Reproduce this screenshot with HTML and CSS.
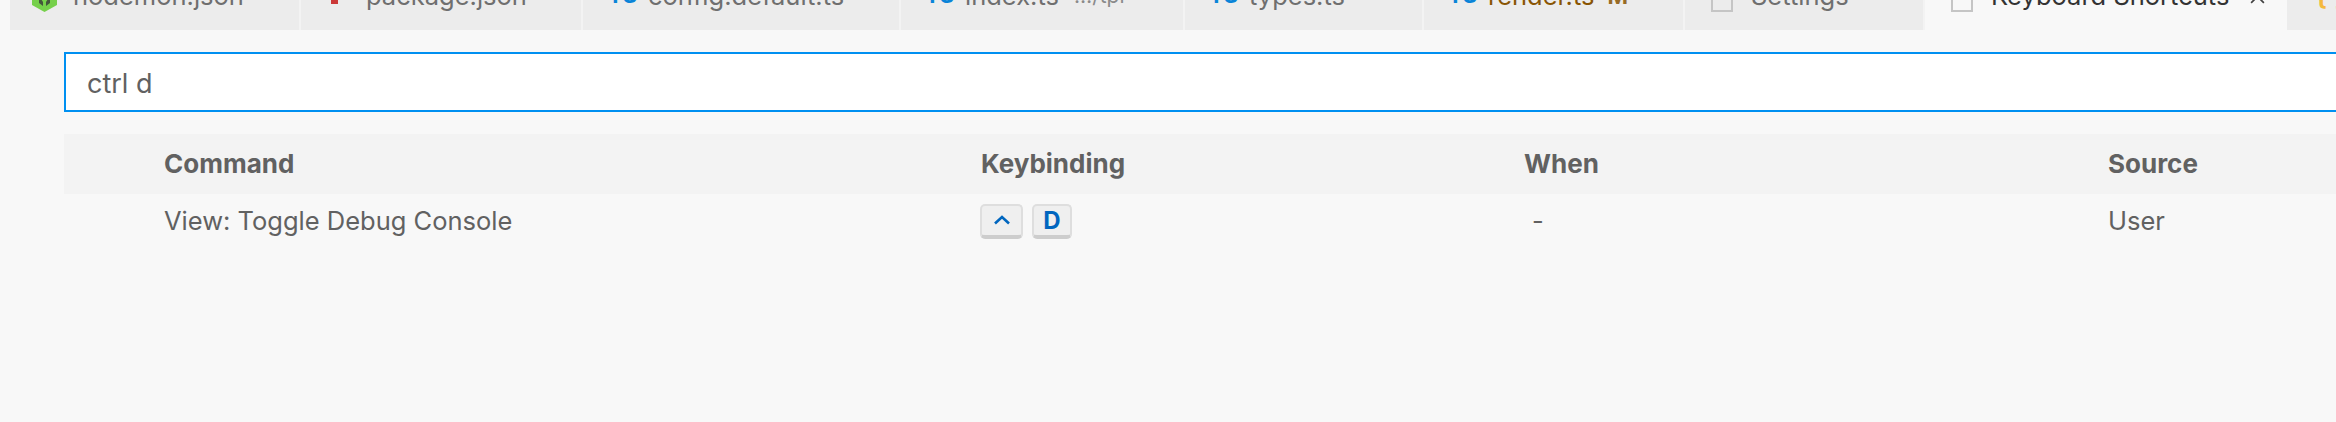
FILE: index.html
```html
<!DOCTYPE html>
<html lang="en">
<head>
    <meta charset="UTF-8">
    <title>Keyboard Shortcuts</title>
    <link rel="stylesheet" href="styles.css">
</head>
<body>
    <div class="tabs">
        <div class="tab tab-nodemon">
            <svg class="icon-nodemon" viewBox="0 0 25 30">
                <path d="M12.5 0 L25 6 V23 L12.5 30 L0 23 V6 Z" fill="#76d04b"/>
                <path d="M7 14 L11 20 L11 24 L7 21 Z M18 14 L14 20 L14 24 L18 21 Z" fill="#44553c"/>
            </svg>
            <span class="name">nodemon.json</span>
        </div>
        <div class="tab tab-package">
            <span class="icon-npm"></span>
            <span class="name">package.json</span>
        </div>
        <div class="tab tab-config">
            <span class="ts">TS</span>
            <span class="name">config.default.ts</span>
        </div>
        <div class="tab tab-index">
            <span class="ts">TS</span>
            <span class="name">index.ts</span>
            <span class="path">…/tpl</span>
        </div>
        <div class="tab tab-types">
            <span class="ts">TS</span>
            <span class="name">types.ts</span>
        </div>
        <div class="tab tab-render">
            <span class="ts">TS</span>
            <span class="name modified">render.ts</span>
            <span class="badge modified">M</span>
        </div>
        <div class="tab tab-settings">
            <span class="icon-file"></span>
            <span class="name">Settings</span>
        </div>
        <div class="tab tab-active">
            <span class="icon-file"></span>
            <span class="name">Keyboard Shortcuts</span>
            <svg class="icon-close" viewBox="0 0 16 16">
                <path d="M2 2 L14 14 M14 2 L2 14" stroke="#424242" stroke-width="1.6" fill="none"/>
            </svg>
        </div>
        <div class="tab tab-json">
            <span class="braces">{ }</span>
        </div>
    </div>

    <div class="editor">
        <div class="search">ctrl d</div>

        <div class="table-row table-head">
            <div>Command</div>
            <div>Keybinding</div>
            <div>When</div>
            <div>Source</div>
        </div>

        <div class="table-row table-body">
            <div>View: Toggle Debug Console</div>
            <div class="keys">
                <span class="key key-ctrl">
                    <svg viewBox="0 0 18 10">
                        <path d="M2 8.5 L9 2 L16 8.5" stroke="#0066bf" stroke-width="2.6" fill="none"/>
                    </svg>
                </span>
                <span class="key key-d">D</span>
            </div>
            <div class="dash">-</div>
            <div>User</div>
        </div>
    </div>
</body>
</html>
```

FILE: styles.css
```css
* {
    box-sizing: border-box;
}
html, body {
    margin: 0;
    height: 422px;
    overflow: hidden;
}
body {
    background-color: #f8f8f8;
    color: #616161;
    font-family: Inter, "Noto Sans", sans-serif;
    font-size: 25.5px;
}
.tabs {
    display: flex;
    height: 70px;
    margin-top: -40px;
    padding-left: 10px;
}
.tab {
    display: flex;
    flex: none;
    align-items: flex-end;
    height: 70px;
    padding: 0 0 19px 22px;
    background-color: #ececec;
    border-right: 2px solid #f3f3f3;
    color: #6f6f6f;
    line-height: 30px;
    white-space: nowrap;
    overflow: hidden;
}
.tab-nodemon { width: 291px; }
.tab-package { width: 282px; }
.tab-config { width: 318px; padding-left: 25px; }
.tab-index { width: 284px; padding-left: 24px; }
.tab-types { width: 239px; padding-left: 24px; }
.tab-render { width: 261px; padding-left: 24px; }
.tab-settings { width: 240px; padding-left: 26px; }
.tab-active {
    width: 362px;
    padding-left: 26px;
    background-color: #f8f8f8;
    border-right: 0;
    color: #333333;
}
.tab-json {
    width: 49px;
    padding-left: 28px;
    border-right: 0;
}
.icon-nodemon {
    flex: none;
    width: 25px;
    height: 30px;
    margin: 0 16px -1px 0;
}
.icon-npm {
    flex: none;
    width: 7px;
    height: 24px;
    margin: 0 28px 7px 8px;
    background-color: #cb3837;
}
.ts {
    flex: none;
    width: 24px;
    margin: 0 16px 1px 0;
    color: #0a84d8;
    font-size: 22px;
    font-weight: 700;
}
.path {
    margin-left: 15px;
    font-size: 21px;
    color: #8a8a8a;
}
.modified {
    color: #895503;
}
.badge {
    margin-left: 13px;
    font-size: 22px;
    font-weight: 700;
    opacity: 0.85;
}
.icon-file {
    flex: none;
    width: 22px;
    height: 24px;
    margin: 0 18px -1px 0;
    border: 2px solid #c5c5c5;
}
.icon-close {
    flex: none;
    width: 17px;
    height: 17px;
    margin: 0 0 6px 20px;
}
.braces {
    color: #f4b93e;
    font-weight: 700;
    letter-spacing: 1px;
}
.editor {
    padding: 22px 0 0 64px;
    width: 2420px;
}
.search {
    height: 60px;
    padding: 4px 0 0 21px;
    background-color: #ffffff;
    border: 2px solid #0090f1;
    font-size: 27px;
    line-height: 52px;
}
.table-row {
    display: grid;
    grid-template-columns: 817px 543px 584px 1fr;
    padding-left: 100px;
}
.table-head {
    height: 60px;
    margin-top: 22px;
    background-color: #f3f3f3;
    font-size: 26px;
    font-weight: 700;
    line-height: 60px;
}
.table-body {
    height: 52px;
    align-items: center;
}
.keys {
    display: flex;
    gap: 9px;
    margin-left: -1px;
    margin-top: 2px;
}
.key {
    display: flex;
    align-items: center;
    justify-content: center;
    height: 35px;
    background-color: #efefef;
    border: 2px solid #dedede;
    border-bottom-width: 4px;
    border-bottom-color: #cdcdcd;
    border-radius: 5px;
    color: #0066bf;
    font-size: 24px;
    font-weight: 700;
}
.key svg {
    width: 18px;
    height: 10px;
}
.key-ctrl { width: 43px; }
.key-d { width: 40px; }
.dash {
    padding-left: 8px;
}
```
